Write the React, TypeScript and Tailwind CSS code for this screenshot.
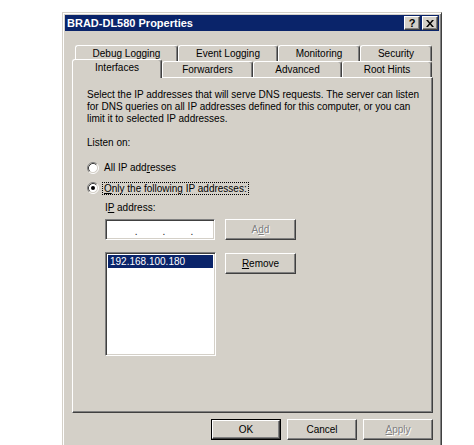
import React from "react"

const raised = "border border-t-white border-l-white border-r-[#404040] border-b-[#404040] shadow-[inset_-1px_-1px_#808080]"
const sunken = "border border-t-[#808080] border-l-[#808080] border-r-white border-b-white shadow-[inset_1px_1px_#404040,inset_-1px_-1px_#d4d0c8]"

const Radio: React.FC<{ checked?: boolean }> = ({ checked }) => (
    <svg width="12" height="12" viewBox="0 0 12 12" className="shrink-0">
        <circle cx="6" cy="6" r="4.5" fill="#fff" />
        <path d="M2.11 9.89A5.5 5.5 0 0 1 9.89 2.11" fill="none" stroke="#808080" />
        <path d="M9.89 2.11A5.5 5.5 0 0 1 2.11 9.89" fill="none" stroke="#fff" />
        <path d="M2.82 9.18A4.5 4.5 0 0 1 9.18 2.82" fill="none" stroke="#404040" />
        <path d="M9.18 2.82A4.5 4.5 0 0 1 2.82 9.18" fill="none" stroke="#d4d0c8" />
        {checked && <circle cx="6" cy="6" r="2" fill="#000" />}
    </svg>
)

const Tab: React.FC<{ label: string; w: string; active?: boolean }> = ({ label, w, active }) => (
    <div className={`${w} ${active ? "relative z-10 h-[19px] -mb-px pb-[3px]" : "h-[16px]"} flex items-center justify-center rounded-t-[3px] bg-[#d4d0c8] border-t border-l border-r border-t-white border-l-white border-r-[#404040] shadow-[inset_-1px_0_#808080]`}>
        {label}
    </div>
)

const Btn: React.FC<{ children: React.ReactNode; disabled?: boolean; className?: string }> = ({ children, disabled, className = "" }) => (
    <div className={`${raised} ${className} flex items-center justify-center bg-[#d4d0c8] ${disabled ? "text-[#808080] [text-shadow:1px_1px_#fff]" : ""}`}>
        {children}
    </div>
)

const App: React.FC = () => {
    return <div className="w-[474px] h-[445px] overflow-hidden bg-white pl-[62px] pt-[12px] font-['Liberation_Sans',Arial,sans-serif] text-[10px] leading-[12px] text-black">
        <div className="w-[380px] h-[440px] bg-[#d4d0c8] border border-t-[#d4d0c8] border-l-[#d4d0c8] border-r-[#404040] border-b-[#404040] shadow-[inset_1px_1px_#fff,inset_-1px_-1px_#808080] p-[2px]">
            <div className="h-[16px] bg-[#0a246a] flex items-center justify-between pl-[2px] pr-[1px]">
                <span className="text-white font-bold text-[11px]">BRAD-DL580 Properties</span>
                <div className="flex gap-[2px]">
                    <Btn className="w-[16px] h-[14px] font-bold text-[11px]">?</Btn>
                    <Btn className="w-[16px] h-[14px]">
                        <svg width="8" height="7" viewBox="0 0 8 7"><path d="M0 0h2l2 2.5L6 0h2L5 3.5 8 7H6L4 4.5 2 7H0l3-3.5z" fill="#000" /></svg>
                    </Btn>
                </div>
            </div>

            <div className="pl-[7px] pt-[14px]">
                <div className="flex ml-[3px]">
                    <Tab label="Debug Logging" w="w-[103px]" />
                    <Tab label="Event Logging" w="w-[100px]" />
                    <Tab label="Monitoring" w="w-[82px]" />
                    <Tab label="Security" w="w-[72px]" />
                </div>
                <div className="flex items-end h-[16px]">
                    <Tab label="Interfaces" w="w-[90px]" active />
                    <Tab label="Forwarders" w="w-[91px]" />
                    <Tab label="Advanced" w="w-[89px]" />
                    <Tab label="Root Hints" w="w-[90px]" />
                </div>

                <div className="w-[361px] h-[336px] border border-t-white border-l-white border-r-[#404040] border-b-[#404040] shadow-[inset_-1px_-1px_#808080] pt-[11px] pl-[14px]">
                    <p>Select the IP addresses that will serve DNS requests. The server can listen<br />for DNS queries on all IP addresses defined for this computer, or you can<br />limit it to selected IP addresses.</p>
                    <p className="mt-[12px]">Listen on:</p>

                    <div className="mt-[12px] h-[14px] flex items-center gap-[4px]">
                        <Radio />
                        <span className="pl-[1px]">All IP add<span className="underline">r</span>esses</span>
                    </div>
                    <div className="mt-[6px] h-[14px] flex items-center gap-[3px]">
                        <Radio checked />
                        <span className="border border-dotted border-black px-[1px] leading-[11px]"><span className="underline">O</span>nly the following IP addresses:</span>
                    </div>

                    <div className="pl-[18px]">
                        <p className="mt-[7px]">I<span className="underline">P</span> address:</p>
                        <div className="mt-[5px] flex gap-[10px]">
                            <div className={`${sunken} w-[110px] h-[21px] bg-white flex items-end justify-center gap-[25px] pb-[4px] pl-[8px] leading-[6px] text-[#202020]`}>
                                <span>.</span><span>.</span><span>.</span>
                            </div>
                            <Btn disabled className="w-[71px] h-[21px]">A<span className="underline">d</span>d</Btn>
                        </div>
                        <div className="mt-[12px] flex gap-[9px] items-start">
                            <div className={`${sunken} w-[111px] h-[104px] bg-white p-[2px]`}>
                                <div className="h-[13px] bg-[#0a246a] text-white pl-[2px] flex items-center">192.168.100.180</div>
                            </div>
                            <Btn className="w-[71px] h-[21px] mt-px"><span className="underline">R</span>emove</Btn>
                        </div>
                    </div>
                </div>

                <div className="w-[361px] mt-[6px] flex justify-end gap-[6px]">
                    <div className="w-[70px] h-[21px] border border-black">
                        <Btn className="w-full h-full">OK</Btn>
                    </div>
                    <Btn className="w-[70px] h-[21px]">Cancel</Btn>
                    <Btn disabled className="w-[70px] h-[21px]"><span className="underline">A</span>pply</Btn>
                </div>
            </div>
        </div>
    </div>
}

export default App
